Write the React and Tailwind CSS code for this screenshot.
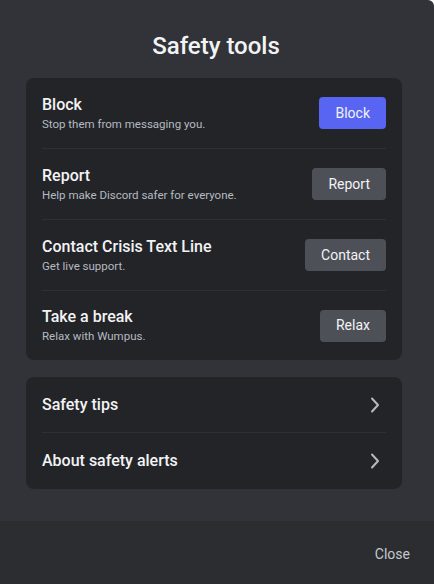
import React from "react";

const rows = [
  { title: "Block", sub: "Stop them from messaging you.", btn: "Block", primary: true, h: "h-[71px]" },
  { title: "Report", sub: "Help make Discord safer for everyone.", btn: "Report", h: "h-[71px]" },
  { title: "Contact Crisis Text Line", sub: "Get live support.", btn: "Contact", h: "h-[71px]" },
  { title: "Take a break", sub: "Relax with Wumpus.", btn: "Relax", h: "h-[69px]" },
];

function Chevron() {
  return (
    <svg width="10" height="16" viewBox="0 0 10 16" fill="none">
      <path d="M2 1.5 L8 8 L2 14.5" stroke="#b5bac1" strokeWidth="2" strokeLinecap="round" strokeLinejoin="round" />
    </svg>
  );
}

export default function App() {
  return (
    <div
      className="w-[434px] h-[584px] flex flex-col bg-[#313338] overflow-hidden rounded-tr-[6px]"
      style={{ fontFamily: 'Roboto, "Noto Sans", sans-serif' }}
    >
      <div className="flex-1 flex flex-col pl-[26px] pr-[32px]">
        <h1 className="text-center text-[24px] leading-[30px] font-medium text-[#f2f3f5] mt-[31px] mb-[17px] pl-[4px]">
          Safety tools
        </h1>
        <div className="bg-[#232428] rounded-[8px] px-4">
          {rows.map((r, i) => (
            <div
              key={r.title}
              className={`flex items-center justify-between ${r.h} ${i < rows.length - 1 ? "border-b border-[#2e3035]" : ""}`}
            >
              <div className="flex flex-col">
                <span className="text-[16px] leading-[20px] font-medium text-[#f2f3f5]">{r.title}</span>
                <span className="text-[11.5px] leading-[16px] text-[#b5bac1] mt-[1px]">{r.sub}</span>
              </div>
              <button
                className={`h-[32px] px-4 rounded-[4px] text-[14px] font-normal text-[#f2f3f5] ${r.primary ? "bg-[#5865f2]" : "bg-[#4e5058]"}`}
              >
                {r.btn}
              </button>
            </div>
          ))}
        </div>
        <div className="bg-[#232428] rounded-[8px] px-4 mt-[17px]">
          {["Safety tips", "About safety alerts"].map((t, i) => (
            <div
              key={t}
              className={`flex items-center justify-between h-[56px] ${i === 0 ? "border-b border-[#2e3035]" : ""}`}
            >
              <span className="text-[16px] leading-[20px] font-medium text-[#f2f3f5]">{t}</span>
              <span className="mr-[6px] flex"><Chevron /></span>
            </div>
          ))}
        </div>
      </div>
      <div className="h-[63px] bg-[#2b2d31] flex items-center justify-end pr-[24px] pt-[3px]">
        <span className="text-[14px] font-normal text-[#c4c9ce]">Close</span>
      </div>
    </div>
  );
}
